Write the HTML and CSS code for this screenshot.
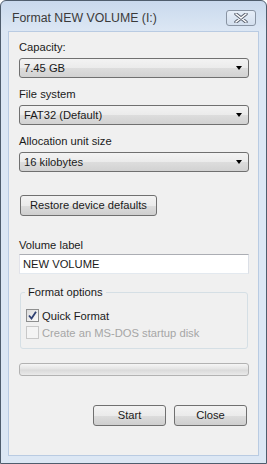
FILE: index.html
```html
<!DOCTYPE html>
<html lang="en">
<head>
    <meta charset="UTF-8">
    <title>Format NEW VOLUME (I:)</title>
    <link rel="stylesheet" href="styles.css">
</head>
<body>
    <div class="window">
        <div class="titlebar">
            <span class="title">Format NEW VOLUME (I:)</span>
            <span class="close-btn">
                <svg width="14" height="10" viewBox="0 0 14 10">
                    <path d="M2 1 L12 9 M12 1 L2 9" stroke="#5a6270" stroke-width="3.4" stroke-linecap="round"/>
                    <path d="M2 1 L12 9 M12 1 L2 9" stroke="#ffffff" stroke-width="1.6" stroke-linecap="round"/>
                </svg>
            </span>
        </div>

        <div class="panel">
            <div class="label">Capacity:</div>
            <div class="combo">7.45 GB</div>

            <div class="label">File system</div>
            <div class="combo">FAT32 (Default)</div>

            <div class="label">Allocation unit size</div>
            <div class="combo">16 kilobytes</div>

            <div class="btn restore">Restore device defaults</div>

            <div class="label volume">Volume label</div>
            <div class="textbox">NEW VOLUME</div>

            <fieldset class="group">
                <legend>Format options</legend>
                <div class="check-row">
                    <span class="checkbox checked">
                        <svg width="9" height="9" viewBox="0 0 9 9">
                            <path d="M1 4.5 L3.5 7.5 L8 0.8" fill="none" stroke="#2f4173" stroke-width="1.8"/>
                        </svg>
                    </span>
                    <span>Quick Format</span>
                </div>
                <div class="check-row disabled">
                    <span class="checkbox"></span>
                    <span>Create an MS-DOS startup disk</span>
                </div>
            </fieldset>

            <div class="progress"></div>

            <div class="actions">
                <div class="btn">Start</div>
                <div class="btn">Close</div>
            </div>
        </div>
    </div>
</body>
</html>
```

FILE: styles.css
```css
body {
    margin: 0;
    background: #ffffff;
    font-family: 'Liberation Sans', Arial, sans-serif;
    font-size: 11.2px;
    color: #1a1a1a;
}
.window {
    width: 267px;
    height: 464px;
    box-sizing: border-box;
    border: 1px solid #4f5d6d;
    border-radius: 6px 6px 0 0;
    background: linear-gradient(#c9d9ed, #dce7f4 30px, #dce7f4);
    padding: 0 7px 7px;
    display: flex;
    flex-direction: column;
}
.titlebar {
    height: 30px;
    box-sizing: border-box;
    margin: 0 -7px;
    padding: 4px 10px 0 11px;
    display: flex;
    align-items: center;
    justify-content: space-between;
}
.title {
    color: #3a3a3a;
    font-size: 12.3px;
}
.close-btn {
    width: 30px;
    height: 16px;
    box-sizing: border-box;
    border: 1px solid #8994a3;
    border-radius: 3px;
    background: linear-gradient(#e6eef8, #d3dfee);
    display: flex;
    align-items: center;
    justify-content: center;
}
.panel {
    flex: 1;
    background: #f0f0f0;
    border: 1px solid #b9cbe2;
    padding: 8px 9px 0 10px;
    display: flex;
    flex-direction: column;
}
.label {
    height: 15px;
    line-height: 15px;
    margin-top: 9px;
}
.label:first-child {
    margin-top: 0;
}
.combo {
    height: 20px;
    box-sizing: border-box;
    margin-top: 3px;
    border: 1px solid #707070;
    border-radius: 3px;
    background: linear-gradient(#f3f3f3, #ebebeb 50%, #dddddd 51%, #d2d2d2);
    padding-left: 4px;
    line-height: 18px;
    position: relative;
}
.combo::after {
    content: '';
    position: absolute;
    right: 6px;
    top: 7px;
    border-left: 3.5px solid transparent;
    border-right: 3.5px solid transparent;
    border-top: 4px solid #000;
}
.btn {
    height: 21px;
    box-sizing: border-box;
    border: 1px solid #707070;
    border-radius: 3px;
    background: linear-gradient(#f3f3f3, #ebebeb 50%, #dddddd 51%, #cfcfcf);
    line-height: 19px;
    text-align: center;
}
.restore {
    align-self: flex-start;
    margin-top: 23px;
    margin-left: 1px;
    padding: 0 9px;
}
.label.volume {
    margin-top: 22px;
}
.textbox {
    height: 20px;
    box-sizing: border-box;
    margin-top: 1px;
    border: 1px solid;
    border-color: #abadb3 #dbdfe6 #e3e9ef #e2e3ea;
    background: #fff;
    padding-left: 3px;
    line-height: 18px;
}
.group {
    margin: 11px 1px 0 1px;
    padding: 8px 4px 8px 5px;
    border: 1px solid #d5dfe5;
    border-radius: 3px;
}
.group legend {
    padding: 0 3px;
    margin-left: -1px;
    line-height: 15px;
}
.check-row {
    height: 15px;
    display: flex;
    align-items: center;
    gap: 3px;
}
.check-row + .check-row {
    margin-top: 2px;
}
.checkbox {
    width: 13px;
    height: 13px;
    box-sizing: border-box;
    border: 1px solid #8e8f8f;
    background: linear-gradient(135deg, #dcdcdc, #fbfbfb);
    display: flex;
    align-items: center;
    justify-content: center;
}
.disabled {
    color: #a6a6a6;
}
.disabled .checkbox {
    border-color: #c8c8c8;
    background: #f4f4f4;
}
.progress {
    height: 13px;
    box-sizing: border-box;
    margin-top: 14px;
    border: 1px solid #b2b2b2;
    border-radius: 3px;
    background: linear-gradient(#f5f5f5, #e4e4e4 45%, #dadada 55%, #eaeaea);
}
.actions {
    margin-top: 29px;
    padding-right: 2px;
    display: flex;
    justify-content: flex-end;
    gap: 8px;
}
.actions .btn {
    width: 73px;
}
```
